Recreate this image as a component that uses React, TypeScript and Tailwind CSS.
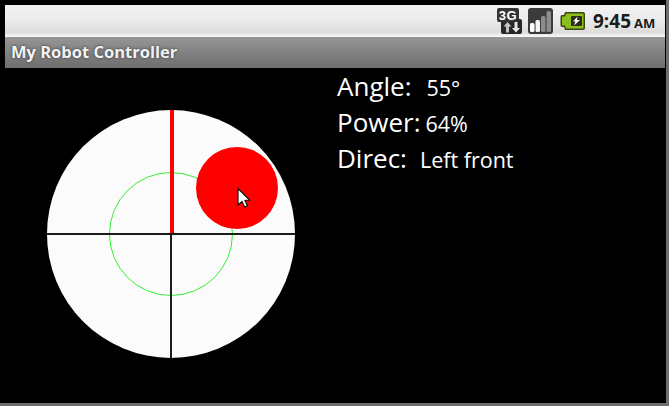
const signalBars = [
  { x: 2, h: 9, fill: '#ffffff' },
  { x: 7.5, h: 12, fill: '#f4f4f4' },
  { x: 13, h: 16, fill: '#8c8c8c' },
  { x: 18.5, h: 21, fill: '#8c8c8c' },
]

function NetworkIcon() {
  return (
    <div className="relative h-[26px] w-[26px]">
      <svg className="absolute left-[4px] top-[11px]" width="21" height="15" viewBox="0 0 21 15">
        <rect x="0" y="0" width="21" height="15" rx="2" fill="#262626" />
        <path d="M6.5 3 L10.5 7.5 H8 V13.5 H5 V7.5 H2.5 Z" fill="#c4c4c4" />
        <path d="M15 13.5 L11 9 H13.5 V3 H16.5 V9 H19 Z" fill="#e6e6e6" />
      </svg>
      <span className="absolute left-0 top-0 flex h-[14px] w-[22px] items-center justify-center rounded-[2px] bg-[#333333] text-[13px] font-bold leading-none tracking-[0.5px] text-white [font-family:'Liberation_Sans',sans-serif]">
        3G
      </span>
    </div>
  )
}

function SignalIcon() {
  return (
    <svg width="26" height="26" viewBox="0 0 26 26">
      <rect width="25" height="26" rx="3" fill="#3b3b3b" />
      {signalBars.map((b) => (
        <rect key={b.x} x={b.x} y={24 - b.h} width="4.5" height={b.h} rx="1.5" fill={b.fill} />
      ))}
    </svg>
  )
}

function BatteryIcon() {
  return (
    <svg width="26" height="20" viewBox="0 0 26 20">
      <path d="M5 1 H23 Q25 1 25 3 V17 Q25 19 23 19 H5 L4 16 H2 Q0.5 16 0.5 14 V6 Q0.5 4 2 4 H4 Z" fill="#3a4714" />
      <path d="M6 2.5 H22.5 Q23.5 2.5 23.5 3.5 V16.5 Q23.5 17.5 22.5 17.5 H6 L5 14.5 H2 V5.5 H5 Z" fill="#8dbf1a" />
      <rect x="11" y="5" width="11" height="10" rx="1" fill="#2a2f1c" />
      <path d="M17.5 5.5 L13 10.5 H15.5 L14 14.5 L20 9 H17 Z" fill="#ffffff" />
    </svg>
  )
}

function Joystick() {
  return (
    <svg width="248" height="248" viewBox="47 110 248 248" className="block">
      <circle cx="171" cy="234" r="124" fill="#fbfbfb" />
      <circle cx="171" cy="234" r="61.5" fill="none" stroke="#33ee33" strokeWidth="1" />
      <rect x="47" y="233" width="248" height="2" fill="#1c1c1c" />
      <rect x="170" y="110" width="2" height="248" fill="#1c1c1c" />
      <rect x="170" y="110" width="4" height="123" fill="#ff0000" />
      <circle cx="237" cy="188" r="41" fill="#ff0000" />
      <path
        d="M238 188.5 V205 L242 201.5 L244.6 207 L247.4 205.7 L245 200.4 L249.6 200 Z"
        fill="#ffffff"
        stroke="#111111"
        strokeWidth="1.2"
      />
    </svg>
  )
}

const readouts = [
  { label: 'Angle:', value: '55°', gap: 'ml-[15px]' },
  { label: 'Power:', value: '64%', gap: 'ml-[5px]' },
  { label: 'Direc:', value: 'Left front', gap: 'ml-[13px]' },
]

export default function App() {
  return (
    <div className="flex h-[406px] w-[669px] flex-col overflow-hidden bg-black [font-family:'Open_Sans','Noto_Sans',sans-serif]">
      <div className="flex min-h-0 flex-1">
        <div className="flex min-w-0 flex-1 flex-col pl-[5px] pt-[5px]">
          <div className="flex h-[32px] items-center bg-[linear-gradient(#f2f2f2,#ececec_45%,#dcdcdc_85%,#fafafa_100%)]">
            <div className="ml-[492px] flex items-center">
              <NetworkIcon />
              <div className="ml-[5px]"><SignalIcon /></div>
              <div className="ml-[6px]"><BatteryIcon /></div>
              <span className="ml-[7px] flex items-baseline text-[19px] font-bold leading-none text-[#1c1c1c]">
                9:45
                <span className="ml-[3px] text-[13px]">AM</span>
              </span>
            </div>
          </div>
          <div className="flex h-[31px] items-center bg-[linear-gradient(#969696,#6e6e6e)] pl-[6px]">
            <span className="text-[16.5px] font-bold leading-none text-[#f2f2f2] [text-shadow:0_0_3px_#333]">
              My Robot Controller
            </span>
          </div>
          <div className="flex flex-1 items-start">
            <div className="ml-[42px] mt-[42px]">
              <Joystick />
            </div>
            <div className="ml-[42px] flex flex-col text-white">
              {readouts.map((r) => (
                <div key={r.label} className="flex h-[36px] items-baseline">
                  <span className="text-[26px] leading-[36px]">{r.label}</span>
                  <span className={`${r.gap} text-[21.5px] leading-[36px]`}>{r.value}</span>
                </div>
              ))}
            </div>
          </div>
        </div>
        <div className="ml-[1px] w-[3px] bg-[#6e6e6e]" />
      </div>
      <div className="h-[3px] bg-[#6e6e6e]" />
    </div>
  )
}
